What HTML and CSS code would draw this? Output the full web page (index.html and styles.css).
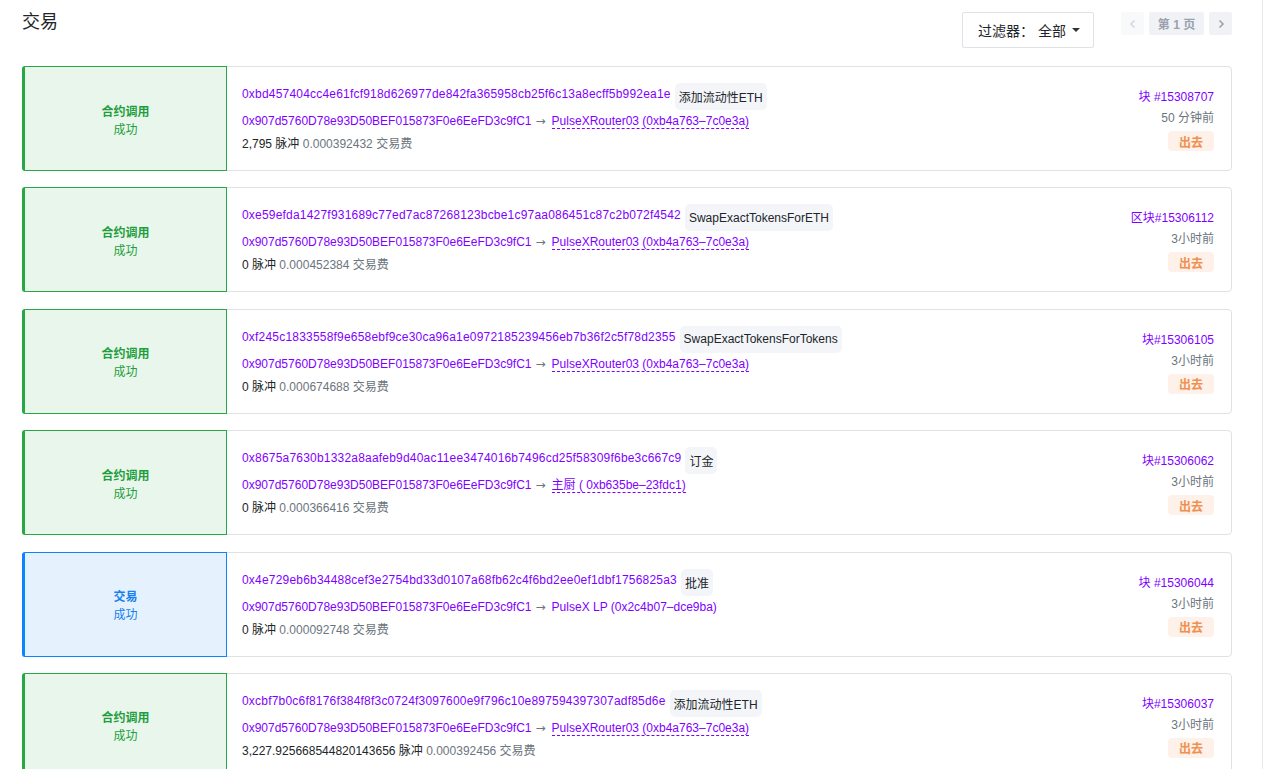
FILE: index.html
```html
<!DOCTYPE html>
<html lang="zh">
<head>
<meta charset="utf-8">
<title>交易</title>
<link rel="stylesheet" href="styles.css">
</head>
<body>
<div class="page">
  <header class="header">
    <h1 class="title">交易</h1>
    <div class="tools">
      <button class="filter"><span>过滤器： 全部</span><span class="caret"></span></button>
      <nav class="pager">
        <span class="pg-btn disabled"><svg width="10" height="10" viewBox="0 0 10 10"><polyline points="6.5,1.5 3,5 6.5,8.5" fill="none" stroke="currentColor" stroke-width="1.6"/></svg></span>
        <span class="pg-page">第 1 页</span>
        <span class="pg-btn"><svg width="10" height="10" viewBox="0 0 10 10"><polyline points="3.5,1.5 7,5 3.5,8.5" fill="none" stroke="currentColor" stroke-width="1.6"/></svg></span>
      </nav>
    </div>
  </header>

  <div class="list">
    <div class="card">
      <div class="status green"><b>合约调用</b><span>成功</span></div>
      <div class="main">
        <div class="row1"><span class="hash">0xbd457404cc4e61fcf918d626977de842fa365958cb25f6c13a8ecff5b992ea1e</span><span class="method">添加流动性ETH</span></div>
        <div class="row2"><span class="addr">0x907d5760D78e93D50BEF015873F0e6EeFD3c9fC1</span><span class="arrow">→</span><span class="to dashed">PulseXRouter03 (0xb4a763–7c0e3a)</span></div>
        <div class="row3"><span class="val">2,795 脉冲</span> <span class="fee">0.000392432 交易费</span></div>
      </div>
      <div class="side">
        <div class="block">块 #15308707</div>
        <div class="time">50 分钟前</div>
        <span class="dir">出去</span>
      </div>
    </div>

    <div class="card">
      <div class="status green"><b>合约调用</b><span>成功</span></div>
      <div class="main">
        <div class="row1"><span class="hash">0xe59efda1427f931689c77ed7ac87268123bcbe1c97aa086451c87c2b072f4542</span><span class="method">SwapExactTokensForETH</span></div>
        <div class="row2"><span class="addr">0x907d5760D78e93D50BEF015873F0e6EeFD3c9fC1</span><span class="arrow">→</span><span class="to dashed">PulseXRouter03 (0xb4a763–7c0e3a)</span></div>
        <div class="row3"><span class="val">0 脉冲</span> <span class="fee">0.000452384 交易费</span></div>
      </div>
      <div class="side">
        <div class="block">区块#15306112</div>
        <div class="time">3小时前</div>
        <span class="dir">出去</span>
      </div>
    </div>

    <div class="card">
      <div class="status green"><b>合约调用</b><span>成功</span></div>
      <div class="main">
        <div class="row1"><span class="hash">0xf245c1833558f9e658ebf9ce30ca96a1e0972185239456eb7b36f2c5f78d2355</span><span class="method">SwapExactTokensForTokens</span></div>
        <div class="row2"><span class="addr">0x907d5760D78e93D50BEF015873F0e6EeFD3c9fC1</span><span class="arrow">→</span><span class="to dashed">PulseXRouter03 (0xb4a763–7c0e3a)</span></div>
        <div class="row3"><span class="val">0 脉冲</span> <span class="fee">0.000674688 交易费</span></div>
      </div>
      <div class="side">
        <div class="block">块#15306105</div>
        <div class="time">3小时前</div>
        <span class="dir">出去</span>
      </div>
    </div>

    <div class="card">
      <div class="status green"><b>合约调用</b><span>成功</span></div>
      <div class="main">
        <div class="row1"><span class="hash">0x8675a7630b1332a8aafeb9d40ac11ee3474016b7496cd25f58309f6be3c667c9</span><span class="method">订金</span></div>
        <div class="row2"><span class="addr">0x907d5760D78e93D50BEF015873F0e6EeFD3c9fC1</span><span class="arrow">→</span><span class="to dashed">主厨 ( 0xb635be–23fdc1)</span></div>
        <div class="row3"><span class="val">0 脉冲</span> <span class="fee">0.000366416 交易费</span></div>
      </div>
      <div class="side">
        <div class="block">块#15306062</div>
        <div class="time">3小时前</div>
        <span class="dir">出去</span>
      </div>
    </div>

    <div class="card">
      <div class="status blue"><b>交易</b><span>成功</span></div>
      <div class="main">
        <div class="row1"><span class="hash">0x4e729eb6b34488cef3e2754bd33d0107a68fb62c4f6bd2ee0ef1dbf1756825a3</span><span class="method">批准</span></div>
        <div class="row2"><span class="addr">0x907d5760D78e93D50BEF015873F0e6EeFD3c9fC1</span><span class="arrow">→</span><span class="to">PulseX LP (0x2c4b07–dce9ba)</span></div>
        <div class="row3"><span class="val">0 脉冲</span> <span class="fee">0.000092748 交易费</span></div>
      </div>
      <div class="side">
        <div class="block">块 #15306044</div>
        <div class="time">3小时前</div>
        <span class="dir">出去</span>
      </div>
    </div>

    <div class="card">
      <div class="status green"><b>合约调用</b><span>成功</span></div>
      <div class="main">
        <div class="row1"><span class="hash">0xcbf7b0c6f8176f384f8f3c0724f3097600e9f796c10e897594397307adf85d6e</span><span class="method">添加流动性ETH</span></div>
        <div class="row2"><span class="addr">0x907d5760D78e93D50BEF015873F0e6EeFD3c9fC1</span><span class="arrow">→</span><span class="to dashed">PulseXRouter03 (0xb4a763–7c0e3a)</span></div>
        <div class="row3"><span class="val">3,227.925668544820143656 脉冲</span> <span class="fee">0.000392456 交易费</span></div>
      </div>
      <div class="side">
        <div class="block">块#15306037</div>
        <div class="time">3小时前</div>
        <span class="dir">出去</span>
      </div>
    </div>
  </div>
</div>
</body>
</html>
```

FILE: styles.css
```css
html, body {
  margin: 0;
  padding: 0;
  background: #fff;
  overflow: hidden;
}
body {
  font-family: "Liberation Sans", "Noto Sans CJK SC", sans-serif;
  font-size: 12px;
  color: #212529;
}
.page {
  box-sizing: border-box;
  width: 1263px;
  min-height: 100vh;
  padding: 12px 30px 0 22px;
  border-right: 1px solid #e6e8ec;
}
.header {
  display: flex;
  justify-content: space-between;
  align-items: flex-start;
  height: 35px;
  margin-bottom: 19px;
}
.title {
  margin: -2px 0 0;
  font-size: 18px;
  font-weight: normal;
  line-height: 24px;
  color: #212529;
}
.tools {
  display: flex;
  align-items: flex-start;
  gap: 27px;
}
.filter {
  box-sizing: border-box;
  height: 36px;
  width: 132px;
  padding: 0 0 0 15px;
  background: #fff;
  border: 1px solid #dfe2e6;
  border-radius: 2px;
  font-family: inherit;
  font-size: 14px;
  color: #212529;
  display: flex;
  align-items: center;
  white-space: nowrap;
}
.caret {
  display: inline-block;
  margin-left: 6px;
  width: 0;
  height: 0;
  border-left: 4px solid transparent;
  border-right: 4px solid transparent;
  border-top: 4px solid #333;
}
.pager {
  display: flex;
  gap: 5px;
}
.pg-btn, .pg-page {
  height: 23px;
  display: flex;
  align-items: center;
  justify-content: center;
  background: #f0f2f6;
  border-radius: 2px;
  color: #9ba1ad;
}
.pg-btn {
  width: 23px;
}
.pg-btn.disabled {
  background: #f8f9fb;
  color: #d5d8de;
}
.pg-page {
  width: 55px;
  font-size: 12px;
  font-weight: bold;
  color: #9ba1ad;
}
.list {
  display: flex;
  flex-direction: column;
  gap: 16.4px;
}
.card {
  box-sizing: border-box;
  height: 105px;
  display: flex;
  border: 1px solid #dfe1e6;
  border-radius: 4px;
}
.status {
  box-sizing: border-box;
  flex: 0 0 205px;
  margin: -1px 0 -1px -1px;
  padding-top: 4px;
  display: flex;
  flex-direction: column;
  justify-content: center;
  align-items: center;
  line-height: 18px;
  font-size: 12px;
  border: 1px solid;
  border-left-width: 3px;
  border-radius: 3px 0 0 3px;
}
.status b {
  font-weight: bold;
}
.status.green {
  background: #e9f6eb;
  border-color: #28a745;
  color: #1e9e3e;
}
.status.blue {
  background: #e5f2fe;
  border-color: #0c84ff;
  color: #1580ee;
}
.main {
  flex: 1;
  padding: 16px 0 0 15px;
  min-width: 0;
}
.row1 {
  display: flex;
  align-items: flex-start;
  height: 27px;
}
.hash {
  color: #7f00ff;
  letter-spacing: 0.2px;
  line-height: 22px;
}
.method {
  margin-left: 4px;
  height: 27px;
  padding: 0 4px;
  display: inline-flex;
  align-items: center;
  background: #f4f5f9;
  border-radius: 5px;
  color: #212529;
}
.row2, .row3 {
  line-height: 22px;
  white-space: nowrap;
}
.row3 {
  padding-top: 1px;
}
.addr, .to {
  color: #7f00ff;
}
.to.dashed {
  border-bottom: 1px dashed #7f00ff;
}
.arrow {
  display: inline-block;
  margin: 0 6px 0 4px;
  color: #6c757d;
  font-family: "DejaVu Sans", sans-serif;
  font-size: 12px;
}
.val {
  color: #212529;
}
.fee {
  color: #6c757d;
}
.side {
  padding: 20px 17px 0 0;
  display: flex;
  flex-direction: column;
  align-items: flex-end;
}
.block {
  color: #7f00ff;
  line-height: 20px;
}
.time {
  color: #6c757d;
  line-height: 22px;
}
.dir {
  margin-top: 2px;
  height: 20px;
  padding: 0 11px;
  display: inline-flex;
  align-items: center;
  background: #fdf1ea;
  border-radius: 4px;
  color: #f0904e;
  font-weight: bold;
}
```
